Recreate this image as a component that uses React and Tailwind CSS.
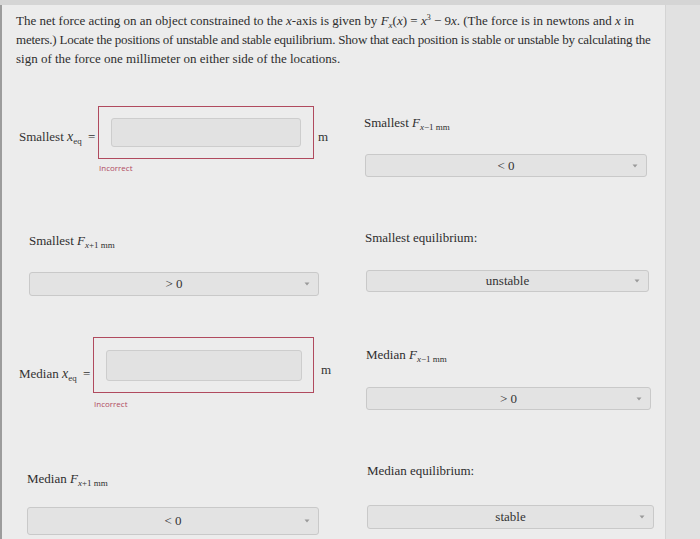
import React from 'react'

const serif = { fontFamily: '"Liberation Serif", "Times New Roman", serif' }

function Caret() {
  return (
    <svg width="6" height="4" viewBox="0 0 6 4" className="shrink-0">
      <path d="M0.5 0.5 L3 3.5 L5.5 0.5 Z" fill="#9a9a9a" />
    </svg>
  )
}

function Dropdown({ value, className }) {
  return (
    <div className={`relative flex items-center justify-center rounded-[3px] border border-[#c9c9c9] bg-[#e3e3e3] text-[13px] text-[#333] ${className}`}>
      <span>{value}</span>
      <span className="absolute right-[8px] top-1/2 -translate-y-1/2 flex">
        <Caret />
      </span>
    </div>
  )
}

function Sub({ children }) {
  return <span className="relative top-[3px] text-[9px] leading-none">{children}</span>
}

function Fsub({ sub }) {
  return (
    <span className="whitespace-nowrap">
      <i>F</i>
      <Sub>
        <i>x</i>{sub}
      </Sub>
    </span>
  )
}

function Xeq() {
  return (
    <span className="whitespace-nowrap">
      <i className="text-[14px]">x</i>
      <Sub>eq</Sub>
    </span>
  )
}

function AnswerBox({ label, labelClass, boxClass, innerClass, mClass }) {
  return (
    <div className="flex items-center">
      <div className={`pl-[17px] text-[13px] text-[#333] whitespace-nowrap shrink-0 ${labelClass}`}>
        {label} <span className="ml-[3px]">=</span>
      </div>
      <div className={`border-[1.5px] border-[#b04a5e] flex shrink-0 ${boxClass}`}>
        <div className={`rounded-[3px] border border-[#cdcdcd] bg-[#e2e2e2] ${innerClass}`} />
      </div>
      <span className={`text-[13px] text-[#333] ${mClass}`}>m</span>
    </div>
  )
}

function Incorrect({ className }) {
  return (
    <div
      className={`text-[8px] leading-[12px] text-[#b04a5e] ${className}`}
      style={{ fontFamily: '"Open Sans", "Liberation Sans", sans-serif' }}
    >
      Incorrect
    </div>
  )
}

export default function App() {
  return (
    <div className="w-[700px] h-[539px] overflow-hidden bg-[#e1e1e1] flex flex-col" style={serif}>
      <div className="h-[5px] bg-[#d5d5d5] shrink-0" />
      <div className="flex flex-1">
        <div className="w-[665px] h-full bg-[#ececec] border-l-2 border-[#9c9c9c] text-[#2e2e2e] flex flex-col">
          <div className="pl-[14px] pt-[6px] text-[13px] leading-[19px] h-[75px] whitespace-nowrap">
            <div>
              The net force acting on an object constrained to the <i>x</i>-axis is given by{' '}
              <i>F</i><Sub><i>x</i></Sub>(<i>x</i>) = <i>x</i>
              <span className="relative -top-[5px] text-[8px] leading-none">3</span> − 9<i>x</i>. (The force is in
              newtons and <i>x</i> in
            </div>
            <div className="tracking-[-0.22px]">
              meters.) Locate the positions of unstable and stable equilibrium. Show that each position is stable or
              unstable by calculating the
            </div>
            <div>sign of the force one millimeter on either side of the locations.</div>
          </div>

          <div className="flex">
            {/* left column */}
            <div className="w-[340px] flex flex-col">
              <div className="mt-[26px]">
                <AnswerBox
                  label={<>Smallest <Xeq /></>}
                  labelClass="w-[96px] mt-[8px]"
                  boxClass="w-[216px] h-[53px] pl-[12px] pt-[11px]"
                  innerClass="w-[190px] h-[29px]"
                  mClass="ml-[4px] mt-[8px]"
                />
              </div>
              <Incorrect className="mt-[3px] ml-[97px]" />
              <div className="mt-[57px] ml-[27px] text-[13px] leading-[19px]">
                Smallest <Fsub sub="+1 mm" />
              </div>
              <Dropdown value="> 0" className="mt-[22px] ml-[27px] w-[290px] h-[24px]" />

              <div className="mt-[41px]">
                <AnswerBox
                  label={<>Median <Xeq /></>}
                  labelClass="w-[91px] mt-[16px]"
                  boxClass="w-[221px] h-[56px] pl-[12px] pt-[12px]"
                  innerClass="w-[196px] h-[31px]"
                  mClass="ml-[7px] mt-[10px]"
                />
              </div>
              <Incorrect className="mt-[5px] ml-[92px]" />
              <div className="mt-[59px] ml-[25px] text-[13px] leading-[19px]">
                Median <Fsub sub="+1 mm" />
              </div>
              <Dropdown value="< 0" className="mt-[19px] ml-[25px] w-[292px] h-[28px]" />
            </div>

            {/* right column */}
            <div className="flex flex-col ml-[22px]">
              <div className="mt-[33px] text-[13px] leading-[19px]">
                Smallest <Fsub sub="−1 mm" />
              </div>
              <Dropdown value="< 0" className="mt-[22px] ml-[1px] w-[282px] h-[23px]" />
              <div className="mt-[51px] ml-[1px] text-[13px] leading-[19px]">Smallest equilibrium:</div>
              <Dropdown value="unstable" className="mt-[23px] ml-[2px] w-[283px] h-[22px]" />
              <div className="mt-[53px] ml-[2px] text-[13px] leading-[19px]">
                Median <Fsub sub="−1 mm" />
              </div>
              <Dropdown value="> 0" className="mt-[23px] ml-[2px] w-[285px] h-[23px]" />
              <div className="mt-[51px] ml-[3px] text-[13px] leading-[19px]">Median equilibrium:</div>
              <Dropdown value="stable" className="mt-[25px] ml-[3px] w-[287px] h-[24px]" />
            </div>
          </div>
        </div>
        <div className="flex-1 bg-[#e1e1e1] border-l border-[#d4d4d4]" />
      </div>
    </div>
  )
}
